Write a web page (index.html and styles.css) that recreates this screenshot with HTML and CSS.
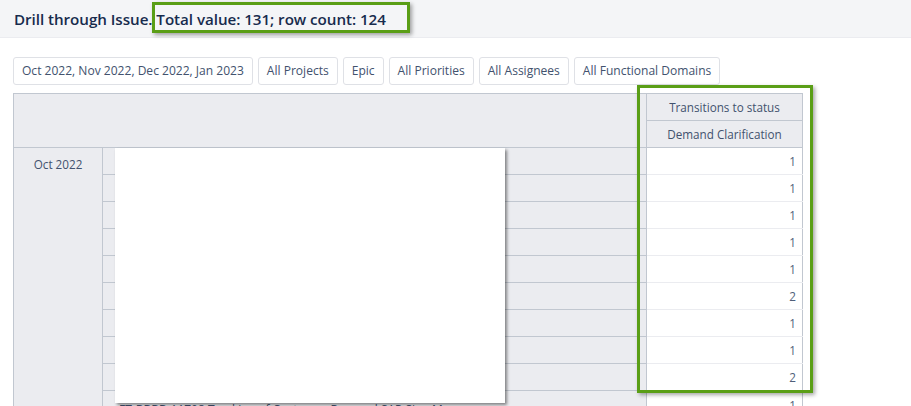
FILE: index.html
```html
<!DOCTYPE html>
<html>
<head>
<meta charset="utf-8">
<link rel="stylesheet" href="styles.css">
</head>
<body>
<div class="topbar">
  <h1 class="title">Drill through Issue. <span class="summary">Total value: 131; row count: 124</span></h1>
</div>
<div class="filters">
  <span class="chip">Oct 2022, Nov 2022, Dec 2022, Jan 2023</span>
  <span class="chip">All Projects</span>
  <span class="chip">Epic</span>
  <span class="chip">All Priorities</span>
  <span class="chip">All Assignees</span>
  <span class="chip">All Functional Domains</span>
</div>
<div class="grid-wrap">
  <table class="grid">
    <colgroup>
      <col class="c-period">
      <col class="c-issue">
      <col class="c-val">
    </colgroup>
    <thead>
      <tr>
        <th class="corner" colspan="2" rowspan="2"></th>
        <th class="colhead">Transitions to status</th>
      </tr>
      <tr>
        <th class="colhead">Demand Clarification</th>
      </tr>
    </thead>
    <tbody>
      <tr><td class="period" rowspan="10">Oct 2022</td><td class="issue"></td><td class="val">1</td></tr>
      <tr><td class="issue"></td><td class="val">1</td></tr>
      <tr><td class="issue"></td><td class="val">1</td></tr>
      <tr><td class="issue"></td><td class="val">1</td></tr>
      <tr><td class="issue"></td><td class="val">1</td></tr>
      <tr><td class="issue"></td><td class="val">2</td></tr>
      <tr><td class="issue"></td><td class="val">1</td></tr>
      <tr><td class="issue"></td><td class="val">1</td></tr>
      <tr><td class="issue"></td><td class="val">2</td></tr>
      <tr><td class="issue last">FT-BBBB-11798 Tracking of Customer Renewal SAP Sign Mon</td><td class="val">1</td></tr>
    </tbody>
  </table>
  <div class="redact"></div>
  <div class="highlight-col"></div>
</div>
</body>
</html>
```
FILE: styles.css
```css
html, body {
  margin: 0;
  padding: 0;
  background: #ffffff;
  font-family: "Open Sans", "Noto Sans", "Liberation Sans", sans-serif;
  color: #42526e;
  overflow: hidden;
  height: 406px;
}
.topbar {
  height: 38px;
  background: #f4f5f7;
  border-bottom: 1px solid #ebecf0;
  box-sizing: border-box;
  padding-left: 14px;
  display: flex;
  align-items: center;
}
.title {
  margin: 0;
  font-size: 15.2px;
  font-weight: 600;
  color: #172b4d;
  letter-spacing: -0.05px;
}
.summary {
  position: relative;
  font-weight: 600;
}
.summary::after {
  content: "";
  position: absolute;
  left: -4px;
  right: -24px;
  top: -7px;
  bottom: -4px;
  border: 3px solid #5a9e16;
  box-shadow: 2px 2px 4px rgba(0,0,0,0.35);
}
.filters {
  display: flex;
  gap: 5px;
  padding: 19px 0 0 13px;
}
.chip {
  height: 28px;
  box-sizing: border-box;
  border: 1px solid #dfe1e6;
  border-radius: 3px;
  background: #fff;
  padding: 0 8px;
  font-size: 12.05px;
  line-height: 26px;
  color: #42526e;
  white-space: nowrap;
}
.grid-wrap {
  position: relative;
  margin: 8px 0 0 13px;
}
.grid {
  border-collapse: collapse;
  table-layout: fixed;
  width: 789px;
  font-size: 11.7px;
}
.c-period { width: 89px; }
.c-issue { width: 544px; }
.c-val { width: 156px; }
.grid tr {
  height: 27px;
}
.grid th, .grid td {
  padding: 0;
  box-sizing: border-box;
}
.corner {
  background: #ebecf0;
  border: 1px solid #c1c7d0;
}
.colhead {
  background: #ebecf0;
  border: 1px solid #c1c7d0;
  font-weight: 400;
  color: #42526e;
  text-align: center;
}
.grid td.period {
  background: #ebecf0;
  border: 1px solid #c1c7d0;
  vertical-align: top;
  text-align: center;
  padding-top: 8px;
  color: #42526e;
}
.issue {
  background: #ebecf0;
  border-top: 1px solid #c1c7d0;
  border-bottom: 1px solid #c1c7d0;
  border-left: 1px solid #c1c7d0;
}
.grid td.issue.last {
  font-size: 12px;
  color: #42526e;
  padding-left: 16px;
  padding-top: 10px;
  vertical-align: top;
  white-space: nowrap;
  overflow: hidden;
}
.grid td.val {
  background: #fff;
  border-left: 1px solid #c1c7d0;
  border-right: 1px solid #c1c7d0;
  border-top: 1px solid #ebecf0;
  border-bottom: 1px solid #ebecf0;
  text-align: right;
  padding-right: 6px;
  color: #505f79;
}
.redact {
  position: absolute;
  left: 102px;
  top: 55px;
  width: 390px;
  height: 255px;
  background: #fff;
  box-shadow: 2px 2px 3px rgba(0,0,0,0.45);
}
.highlight-col {
  position: absolute;
  left: 624px;
  top: -8px;
  width: 176px;
  height: 308px;
  box-sizing: border-box;
  border: 3px solid #5a9e16;
  box-shadow: 2px 2px 4px rgba(0,0,0,0.35);
}
```
